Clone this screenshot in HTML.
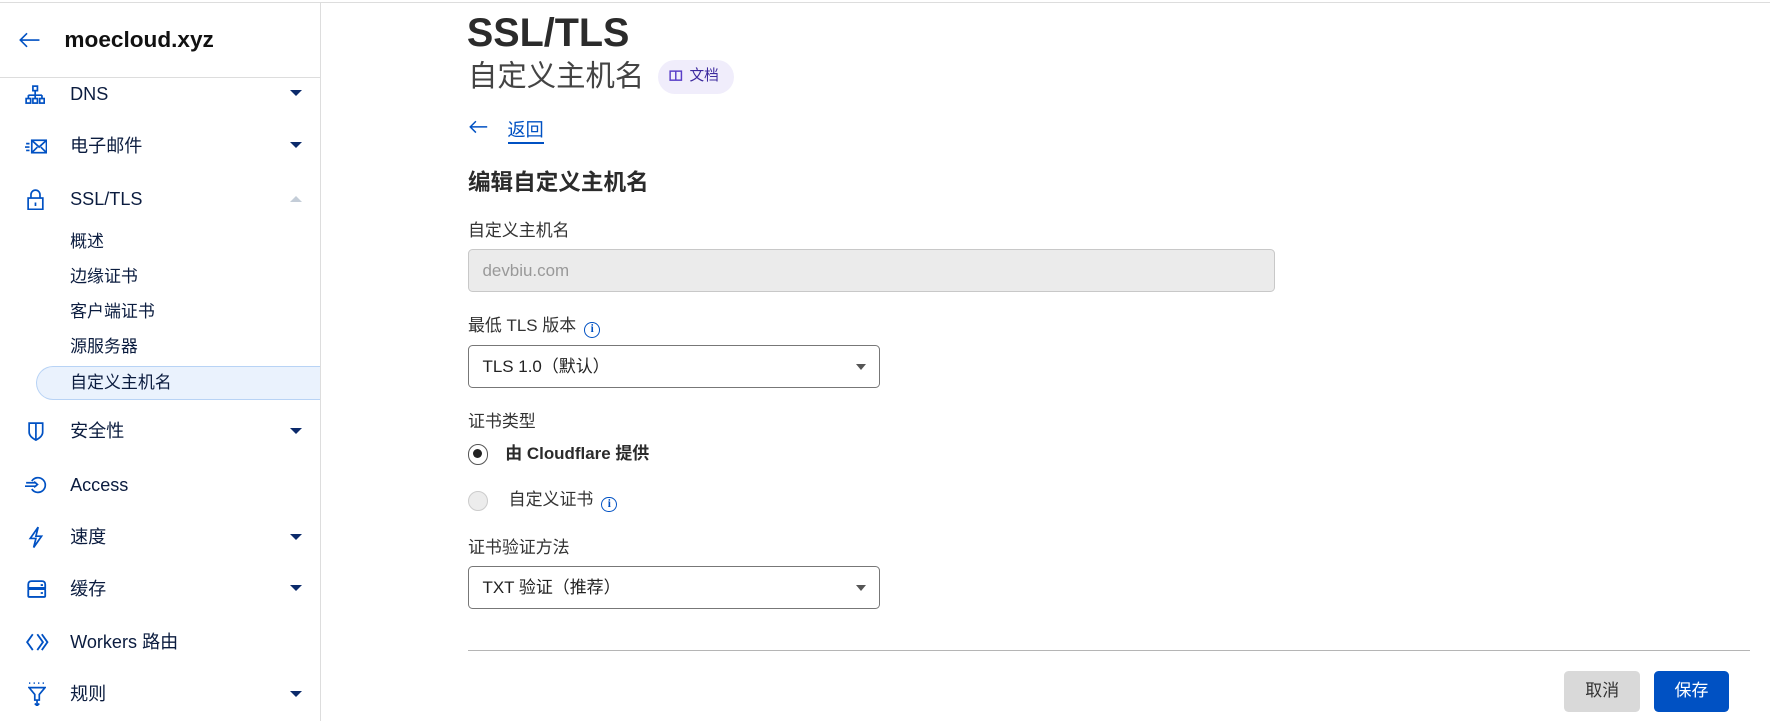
<!DOCTYPE html>
<html><head><meta charset="utf-8"><style>
*{margin:0;padding:0;box-sizing:border-box}
html,body{width:1770px;height:721px;overflow:hidden;background:#fff}
#w{position:relative;width:1566px;height:638px;zoom:1.1303;font-family:"Liberation Sans","Noto Sans CJK SC",sans-serif;color:#222}
.a{position:absolute;white-space:nowrap}
.nav{position:absolute;left:62px;font-size:16px;color:#0b1c3f;line-height:20px}
.ic{position:absolute;left:22px}
.car{position:absolute;left:257px;width:0;height:0;border-left:5.5px solid transparent;border-right:5.5px solid transparent;border-top:6px solid #0b2a6b}
.lbl{position:absolute;left:414px;font-size:15px;color:#333;line-height:20px}
.sel{position:absolute;left:414px;width:365px;height:38px;border:1px solid #777;border-radius:4px;font-size:15px;color:#222;line-height:37px;padding-left:12px}
.sel:after{content:"";position:absolute;right:12px;top:16px;border-left:5px solid transparent;border-right:5px solid transparent;border-top:6px solid #555}
.info{display:inline-block;width:14px;height:14px;border:1.4px solid #0051c3;border-radius:50%;color:#0051c3;font-size:10px;line-height:11px;text-align:center;font-weight:bold;vertical-align:-1px;margin-left:3px;font-family:"Liberation Serif",serif}
</style></head><body><div id="w">
<div class="a" style="left:0;top:2px;width:1566px;height:1px;background:#ddd"></div>
<div class="a" style="left:0;top:68px;width:283px;height:1px;background:#ddd"></div>
<svg class="a" style="left:16px;top:27px" width="20" height="16" viewBox="0 0 20 16"><path d="M19 8H2M8 2L2 8l6 6" fill="none" stroke="#0051c3" stroke-width="1.4"/></svg>
<div class="a" style="left:57px;top:24px;font-size:20px;font-weight:bold;color:#111">moecloud.xyz</div>

<svg class="ic" style="top:75px" width="18" height="18" viewBox="0 0 18 18" fill="none" stroke="#0051c3" stroke-width="1.5"><rect x="7" y="1" width="4" height="4"/><path d="M9 5v4M3 9h12M3 9v3M9 9v3M15 9v3"/><rect x="1" y="12" width="4" height="4"/><rect x="7" y="12" width="4" height="4"/><rect x="13" y="12" width="4" height="4"/></svg>
<div class="nav" style="top:73px">DNS</div><div class="car" style="top:80px"></div>

<svg class="ic" style="top:122px" width="20" height="15" viewBox="0 0 20 15" fill="none" stroke="#0051c3" stroke-width="1.5"><rect x="6" y="2" width="13" height="11"/><path d="M6 2l6.5 6 6.5-6M6 13l5-5M19 13l-5-5M1 5h3M0 8h4M1 11h3"/></svg>
<div class="nav" style="top:119px">电子邮件</div><div class="car" style="top:126px"></div>

<svg class="ic" style="left:24px;top:167px" width="15" height="19" viewBox="0 0 15 19" fill="none" stroke="#0051c3" stroke-width="1.5"><rect x="1" y="8" width="13" height="10"/><path d="M3.5 8V5a4 4 0 0 1 8 0v3M7.5 12v3"/></svg>
<div class="nav" style="top:166px">SSL/TLS</div>
<div class="car" style="top:173px;border-top:0;border-bottom:6px solid #c4cdd8"></div>

<div class="nav" style="top:204px;font-size:15px">概述</div>
<div class="nav" style="top:235px;font-size:15px">边缘证书</div>
<div class="nav" style="top:266px;font-size:15px">客户端证书</div>
<div class="nav" style="top:297px;font-size:15px">源服务器</div>
<div class="a" style="left:32px;top:324px;width:251px;height:30px;background:#eaf2fd;border:1px solid #b8d3f5;border-right:0;border-radius:15px 0 0 15px"></div>
<div class="nav" style="top:329px;font-size:15px">自定义主机名</div>
<div class="a" style="left:283px;top:2px;width:1px;height:636px;background:#ddd"></div>

<svg class="ic" style="left:25px;top:373px" width="14" height="17" viewBox="0 0 14 17" fill="none" stroke="#0051c3" stroke-width="1.5"><path d="M1 1h12v8c0 3-3 5.5-6 7-3-1.5-6-4-6-7z M7 1v15"/></svg>
<div class="nav" style="top:372px">安全性</div><div class="car" style="top:379px"></div>

<svg class="ic" style="top:421px" width="20" height="16" viewBox="0 0 20 16" fill="none" stroke="#0051c3" stroke-width="1.5"><path d="M6 4.5A6.5 6.5 0 1 1 6 11.5"/><path d="M1 6h9M0 9h10M8 5l3 2.5L8 10"/></svg>
<div class="nav" style="top:419px">Access</div>

<svg class="ic" style="left:25px;top:465px" width="14" height="20" viewBox="0 0 14 20" fill="none" stroke="#0051c3" stroke-width="1.5"><path d="M9 1L2 11h5l-2 8 7-10H7l2-8z"/></svg>
<div class="nav" style="top:465px">速度</div><div class="car" style="top:472px"></div>

<svg class="ic" style="left:23px;top:513px" width="19" height="16" viewBox="0 0 19 16" fill="none" stroke="#0051c3" stroke-width="1.6"><path d="M2 4Q2 1 5 1h9q3 0 3 3v3H2z"/><rect x="2" y="8" width="15" height="7" rx="1"/><path d="M13 11.5h2M13 4.5h2"/></svg>
<div class="nav" style="top:511px">缓存</div><div class="car" style="top:518px"></div>

<svg class="ic" style="left:23px;top:559px" width="20" height="18" viewBox="0 0 20 18" fill="none" stroke="#0051c3" stroke-width="1.6"><path d="M6 2L1 9l5 7M10 2l5 7-5 7M14 2l5 7-5 7"/></svg>
<div class="nav" style="top:558px">Workers 路由</div>

<svg class="ic" style="left:25px;top:603px" width="16" height="22" viewBox="0 0 16 22" fill="none" stroke="#0051c3" stroke-width="1.5"><path d="M1 1h1M5 1h1M9 1h1M13 1h1" /><path d="M1 5h14l-5 6v5H6v-5z"/><path d="M8 16v5M6 19l2 2 2-2"/></svg>
<div class="nav" style="top:604px">规则</div><div class="car" style="top:611px"></div>

<div class="a" style="left:413px;top:9px;font-size:35px;font-weight:bold;color:#2b2b2b;line-height:42px">SSL/TLS</div>
<div class="a" style="left:414px;top:52px;font-size:26px;color:#444;line-height:32px">自定义主机名</div>
<div class="a" style="left:582px;top:53px;width:67px;height:30px;border-radius:15px;background:#f0edfb;font-size:13px;color:#3d2a9e;line-height:30px;padding-left:10px">
<svg width="12" height="10" viewBox="0 0 12 10" style="vertical-align:-1px;margin-right:6px" fill="none" stroke="#5a3fc8" stroke-width="1.3"><rect x="1" y="1" width="10" height="8"/><path d="M6 1v8"/></svg>文档</div>

<svg class="a" style="left:414px;top:105px" width="18" height="14" viewBox="0 0 18 14"><path d="M17 7H2M7 2L2 7l5 5" fill="none" stroke="#0051c3" stroke-width="1.3"/></svg>
<div class="a" style="left:449px;top:104px;font-size:16px;color:#0051c3;line-height:22px;border-bottom:2px solid #0051c3">返回</div>

<div class="a" style="left:414px;top:149px;font-size:20px;font-weight:bold;color:#2b2b2b;line-height:26px">编辑自定义主机名</div>

<div class="lbl" style="top:195px">自定义主机名</div>
<div class="a" style="left:414px;top:220px;width:714px;height:38px;background:#ebebeb;border:1px solid #c8c8c8;border-radius:4px;font-size:15px;color:#999;line-height:37px;padding-left:12px">devbiu.com</div>

<div class="lbl" style="top:279px">最低 TLS 版本 <span class="info">i</span></div>
<div class="sel" style="top:305px">TLS 1.0（默认）</div>

<div class="lbl" style="top:364px">证书类型</div>
<div class="a" style="left:414px;top:393px;width:18px;height:18px;border:1.5px solid #555;border-radius:50%"><div style="position:absolute;left:3.5px;top:3.5px;width:8px;height:8px;background:#222;border-radius:50%"></div></div>
<div class="a" style="left:447px;top:392px;font-size:15px;font-weight:bold;color:#2b2b2b;line-height:20px">由 Cloudflare 提供</div>
<div class="a" style="left:414px;top:434px;width:18px;height:18px;border:1px solid #ccc;background:#ececec;border-radius:50%"></div>
<div class="a" style="left:450px;top:433px;font-size:15px;color:#333;line-height:20px">自定义证书 <span class="info">i</span></div>

<div class="lbl" style="top:475px">证书验证方法</div>
<div class="sel" style="top:501px">TXT 验证（推荐）</div>

<div class="a" style="left:414px;top:575px;width:1134px;height:1px;background:#b5b5b5"></div>
<div class="a" style="left:1384px;top:594px;width:67px;height:36px;background:#d9d9d9;border-radius:4px;font-size:15px;color:#333;text-align:center;line-height:36px">取消</div>
<div class="a" style="left:1463px;top:594px;width:67px;height:36px;background:#0051c3;border-radius:4px;font-size:15px;color:#fff;text-align:center;line-height:36px">保存</div>
</div></body></html>
